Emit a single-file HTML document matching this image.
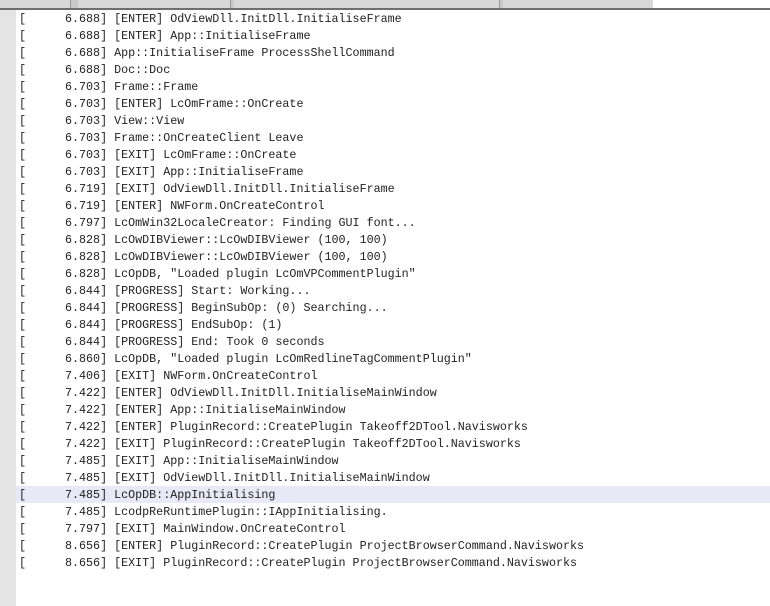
<!DOCTYPE html><html><head><style>
body{margin:0;width:770px;height:606px;background:#fff;position:relative;overflow:hidden;font-family:"Liberation Mono",monospace;font-size:11.7px;color:#222}
#tabs{position:absolute;left:0;top:0;width:770px;height:8px;background:#c8c8c8}
.tab{position:absolute;top:0;height:8px;background:#d8d8d8;border-right:1px solid #999}
#line{position:absolute;left:0;top:8px;width:770px;height:2px;background:#6e6e6e}
#gut{position:absolute;left:0;top:10px;width:16px;height:596px;background:#e4e4e4}
.r{position:absolute;left:16px;width:754px;height:17px;line-height:17px;white-space:pre}
.r span{position:absolute;top:1px}
.b{left:3px}.t{left:49px}
.hl{background:#e8e8f6}
</style></head><body>
<div id="tabs">
<div class="tab" style="left:0;width:70px"></div>
<div class="tab" style="left:78px;width:152px"></div>
<div class="tab" style="left:234px;width:265px"></div>
<div class="tab" style="left:503px;width:410px"></div>
<div class="tab" style="left:653px;width:117px;background:#fff"></div>
</div>
<div id="line"></div>
<div id="gut"></div>
<div id="c"></div>
<script>
var L=[["6.688","[ENTER] OdViewDll.InitDll.InitialiseFrame"],["6.688","[ENTER] App::InitialiseFrame"],["6.688","App::InitialiseFrame ProcessShellCommand"],["6.688","Doc::Doc"],["6.703","Frame::Frame"],["6.703","[ENTER] LcOmFrame::OnCreate"],["6.703","View::View"],["6.703","Frame::OnCreateClient Leave"],["6.703","[EXIT] LcOmFrame::OnCreate"],["6.703","[EXIT] App::InitialiseFrame"],["6.719","[EXIT] OdViewDll.InitDll.InitialiseFrame"],["6.719","[ENTER] NWForm.OnCreateControl"],["6.797","LcOmWin32LocaleCreator: Finding GUI font..."],["6.828","LcOwDIBViewer::LcOwDIBViewer (100, 100)"],["6.828","LcOwDIBViewer::LcOwDIBViewer (100, 100)"],["6.828","LcOpDB, \"Loaded plugin LcOmVPCommentPlugin\""],["6.844","[PROGRESS] Start: Working..."],["6.844","[PROGRESS] BeginSubOp: (0) Searching..."],["6.844","[PROGRESS] EndSubOp: (1)"],["6.844","[PROGRESS] End: Took 0 seconds"],["6.860","LcOpDB, \"Loaded plugin LcOmRedlineTagCommentPlugin\""],["7.406","[EXIT] NWForm.OnCreateControl"],["7.422","[ENTER] OdViewDll.InitDll.InitialiseMainWindow"],["7.422","[ENTER] App::InitialiseMainWindow"],["7.422","[ENTER] PluginRecord::CreatePlugin Takeoff2DTool.Navisworks"],["7.422","[EXIT] PluginRecord::CreatePlugin Takeoff2DTool.Navisworks"],["7.485","[EXIT] App::InitialiseMainWindow"],["7.485","[EXIT] OdViewDll.InitDll.InitialiseMainWindow"],["7.485","LcOpDB::AppInitialising"],["7.485","LcodpReRuntimePlugin::IAppInitialising."],["7.797","[EXIT] MainWindow.OnCreateControl"],["8.656","[ENTER] PluginRecord::CreatePlugin ProjectBrowserCommand.Navisworks"],["8.656","[EXIT] PluginRecord::CreatePlugin ProjectBrowserCommand.Navisworks"]];
var h="";L.forEach(function(l,i){var e=l[1].replace(/&/g,"&amp;").replace(/</g,"&lt;");h+='<div class="r'+(i==28?' hl':'')+'" style="top:'+(10+i*17)+'px"><span class="b">[</span><span class="t">'+l[0]+'] '+e+'</span></div>';});
document.getElementById("c").innerHTML=h;
</script>
</body></html>
